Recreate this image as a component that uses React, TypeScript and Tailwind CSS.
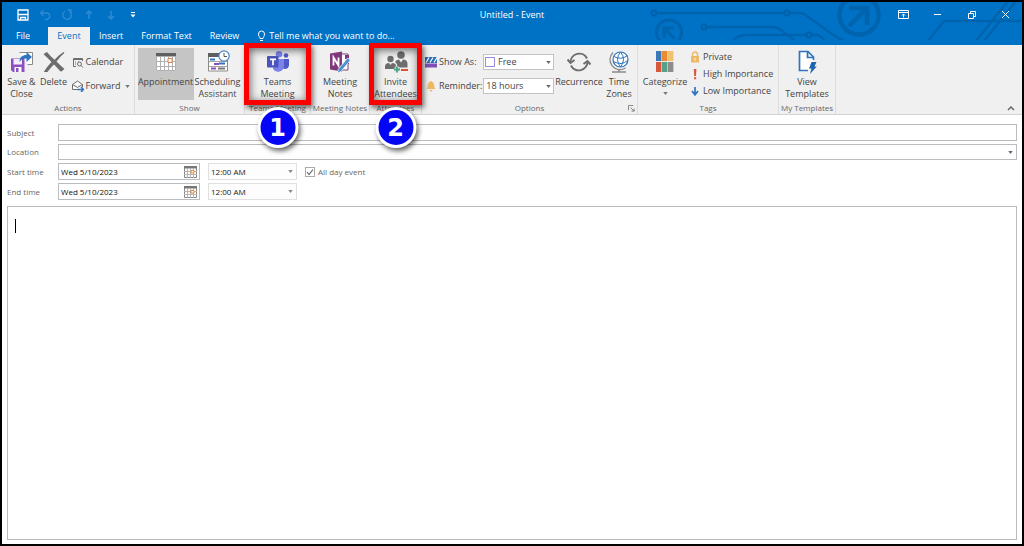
import React, { useState } from "react";
import clsx from "clsx";

const GRAY = "#6d6d6d";

function Caret({ className }: { className?: string }) {
  return (
    <svg viewBox="0 0 6 4" className={clsx("h-[3px] w-[5px]", className)} fill="currentColor">
      <path d="M0 0h6L3 4z" />
    </svg>
  );
}

function SaveIcon() {
  return (
    <svg viewBox="0 0 12 12" className="size-3" fill="none" stroke="white" strokeWidth="1.3">
      <path d="M1 1h10v10H1z" />
      <path d="M1 5.500h10M3.500 11V8.500h5V11" />
    </svg>
  );
}

function UndoIcon() {
  return (
    <svg viewBox="0 0 12 12" className="size-3" fill="none" stroke="#2f8ad2" strokeWidth="1.300">
      <path d="M4.500 1 1.500 4l3 3M1.500 4h6a3.200 3.200 0 0 1 0 6.500H6" />
    </svg>
  );
}

function RedoIcon() {
  return (
    <svg viewBox="0 0 12 12" className="size-3" fill="none" stroke="#2f8ad2" strokeWidth="1.300">
      <path d="M4 2.300A4.300 4.300 0 1 0 8.500 2.500M6.500 1h3.500v3.500" />
    </svg>
  );
}

function ArrowIcon({ down }: { down?: boolean }) {
  return (
    <svg
      viewBox="0 0 12 12"
      className={clsx("size-3", down && "rotate-180")}
      fill="none"
      stroke="#2f8ad2"
      strokeWidth="1.500"
    >
      <path d="M6 10V2M3 5l3-3 3 3" />
    </svg>
  );
}

function CustomizeIcon() {
  return (
    <svg viewBox="0 0 6 6" className="size-[6px]" fill="white">
      <path d="M1 0h4v1H1zM.500 2.500h5L3 5.500z" />
    </svg>
  );
}

function Circuit() {
  return (
    <svg
      viewBox="642 2 380 38"
      className="pointer-events-none absolute top-0 right-0 h-[38px] w-[380px]"
      fill="none"
      stroke="#0063ad"
      strokeWidth="2.300"
    >
      <circle cx="654" cy="13" r="2.500" />
      <path d="M657 13h127M790 13h10q4 0 7 3l22 16q8 6 16 9" />
      <circle cx="787" cy="13" r="2.500" />
      <circle cx="704" cy="27" r="2.500" />
      <path d="M707 27h64q6 0 10 3l13 10" />
      <path d="M733 40q6-5 13-5h60M812 35h4q5 0 8 5" />
      <circle cx="809" cy="35" r="2.500" />
      <circle cx="669" cy="32.500" r="12.500" strokeWidth="3" />
      <path d="M664 38v-10h10M664.500 28.500l10 10" strokeWidth="3" />
      <circle cx="859" cy="15" r="19.500" strokeWidth="4.500" />
      <path d="M849 8h18v17M866 9l-17 17" strokeWidth="4.500" />
      <path d="M928 41l16-20h78" strokeWidth="2.500" />
      <path d="M976 41l32-40M984 41l32-40" strokeWidth="2.500" />
    </svg>
  );
}

function SaveCloseIcon() {
  return (
    <svg viewBox="0 0 24 24" className="size-6" fill="none">
      <path d="M9.500 2.500h13v12h-5" stroke="#888" fill="#fff" />
      <path d="M1 8.500h13.500V22H3l-2-2z" fill="#8e4fc0" />
      <path d="M3.500 9h8.500v5.500H3.500z" fill="#f4eef9" />
      <path d="M4.500 17h7v5h-7z" fill="#fff" />
      <path d="M6 18h2.500v4H6z" fill="#8e4fc0" />
      <path d="M9.500 12c0-5 3-7 7-7V2l5.500 5-5.500 5V8.500c-3.500 0-5.500 1-7 3.500z" fill="#2f74bd" />
    </svg>
  );
}

function DeleteIcon() {
  return (
    <svg viewBox="0 0 24 24" className="size-6" fill={GRAY}>
      <path d="M1.500 4 5 2c2.500 3 5 5.500 7.500 7.800C15 7 18.500 4 21.500 2l1 .8c-3 2.600-5.700 5.500-8 8.700 2.500 2.500 5 5 8 7.500l-3.500 2.800c-2.700-2.600-4.700-4.900-7-7.300-2.500 2.600-4.500 4.700-6.500 7.500H1.800c2.200-4 4.900-7 7.700-10C6.500 9 4 6.500 1.500 4z" />
    </svg>
  );
}

function SmallCalendarIcon() {
  return (
    <svg viewBox="0 0 12 12" className="size-3 shrink-0" fill="none" stroke={GRAY}>
      <path d="M4 10.500H1.500v-8h9V5M1.500 3.500h9" />
      <path d="M3 6h1M3 8h1M6 6h1" />
      <circle cx="7.500" cy="8" r="2" />
      <path d="m9 9.500 2 2" />
    </svg>
  );
}

function ForwardIcon() {
  return (
    <svg viewBox="0 0 12 12" className="size-3 shrink-0" fill="none" stroke={GRAY}>
      <path d="M7 9.500H.500V4.500L5.500 1l5 3.500V7M.500 4.500l5 3 5-3" fill="#fff" />
      <path d="M5.500 9.500H11M9 7l2.500 2.500L9 12" stroke="#2f74bd" strokeWidth="1.500" />
    </svg>
  );
}

function AppointmentIcon() {
  return (
    <svg viewBox="0 0 24 24" className="size-6">
      <path d="M2 3h20v18H2z" fill="#fff" />
      <path d="M2 3h20v3.500H2z" fill="#5f5f5f" />
      <path
        d="M2.500 7v13.500h19V7M6.500 7v14M10.500 7v14M14.500 7v14M18.500 7v14M2 11.500h20M2 16.500h20"
        stroke="#b0b0b0"
        fill="none"
      />
      <path d="M14 8.500h4v4h-4z" fill="#fff" stroke="#e08040" />
    </svg>
  );
}

function SchedulingIcon() {
  return (
    <svg viewBox="0 0 24 24" className="size-6">
      <path d="M2.500 3.500h19v17.500h-19z" fill="#fff" stroke="#8a8a8a" />
      <path d="M2 3h12v4H2z" fill="#5f5f5f" />
      <path d="M3 11.500h18M3 16.500h18" stroke="#a5a5a5" />
      <path d="M4 9.500h5M13 13.500h6" stroke="#2f74bd" strokeWidth="2" />
      <path d="M8 14h5M5 18.500h5" stroke="#8e4fc0" strokeWidth="2" />
      <path d="M12 18.500h7" stroke="#777" strokeWidth="2" />
      <circle cx="18" cy="6" r="5.200" fill="#fff" stroke="#4a83c4" strokeWidth="1.200" />
      <path d="M18 3v3.500h3" stroke="#555" fill="none" />
    </svg>
  );
}

function TeamsIcon() {
  return (
    <svg viewBox="0 0 24 24" className="size-6">
      <circle cx="13" cy="4.200" r="3.300" fill="#7b83eb" />
      <circle cx="20" cy="5.500" r="2.300" fill="#5059c9" />
      <path d="M16 9h7v6.500a4 4 0 0 1-7 2z" fill="#5059c9" />
      <path d="M8 9h10v7a6 6 0 0 1-11 3z" fill="#7b83eb" />
      <rect x="1" y="6" width="11.500" height="11.500" rx="1" fill="#4b53bc" />
      <path d="M4 9.300h6M7 9.300v6" stroke="#fff" strokeWidth="1.700" />
    </svg>
  );
}

function OneNoteIcon() {
  return (
    <svg viewBox="0 0 24 24" className="size-6">
      <path d="M13 4h7v16h-7z" fill="#fff" stroke="#80397b" />
      <path d="M17 5h4v4h-4zM17 10h4v4h-4z" fill="#80397b" />
      <path d="M2 3.500 14 1.500v20L2 19.500z" fill="#80397b" />
      <path d="M5.500 15.500v-8l5 8v-8" stroke="#fff" strokeWidth="1.800" fill="none" />
      <path d="m19.500 8 3 2L13 21.500 9.500 23l.8-3.700z" fill="#4a8fce" stroke="#fff" strokeWidth=".7" />
    </svg>
  );
}

function AttendeesIcon() {
  return (
    <svg viewBox="0 0 24 24" className="size-6" fill={GRAY}>
      <circle cx="6.500" cy="9" r="3.200" />
      <circle cx="17" cy="5" r="3.800" />
      <path d="M1 19v-2.500Q1 13 5 13l1.500 2L8 13q4 0 4 3v3z" />
      <path d="M11 12q1-2.500 4-2.500l2 3 2-3q4.500 0 4.500 4.500v3.500H13.500q0-4-2.500-5.500z" />
      <path d="M10 19.500h6M13 16.500v6" stroke="#e4e4e4" strokeWidth="3.500" />
      <path d="M10 19.500h6M13 16.500v6" stroke="#45a583" strokeWidth="1.800" />
      <path d="M17 20h7" stroke="#dc5034" strokeWidth="2" />
    </svg>
  );
}

function ShowAsIcon() {
  return (
    <svg viewBox="0 0 12 12" className="size-3 shrink-0">
      <path d="M0 1h12v6H0z" fill="#2b6cb3" />
      <path d="m1 6.500 3-5M5 6.500l3-5M9 6.500l3-5" stroke="#fff" strokeWidth="1.200" />
      <path d="M0 7.500h12v4H0z" fill="#7f4fb5" />
    </svg>
  );
}

function BellIcon() {
  return (
    <svg viewBox="0 0 12 12" className="size-3 shrink-0" fill="#edb965">
      <path d="M1.500 9C3 7.500 2.500 5 3 4c.4-1.200 1.300-2 2.200-2.200V1h1.600v.8C7.700 2 8.600 2.800 9 4c.5 1-.0 3.500 1.500 5zM4.500 10h3q-.2 1.500-1.500 1.500T4.500 10z" />
    </svg>
  );
}

function RecurrenceIcon() {
  return (
    <svg viewBox="0 0 24 24" className="size-6" fill="none" stroke={GRAY} strokeWidth="2">
      <path d="M3.500 12.500A8.700 8.700 0 0 1 20 8.500M20.500 11.500A8.700 8.700 0 0 1 4 15.500" />
      <path d="M.500 9.500l3 3.500 4-3M23.500 14.500l-3-3.500-4 3" />
    </svg>
  );
}

function GlobeIcon() {
  return (
    <svg viewBox="0 0 24 24" className="size-6" fill="none">
      <path d="M6 2.500a10 10 0 0 0 12.500 15.500" stroke="#8a8a8a" strokeWidth="1.300" />
      <path d="M12 19v3M5 22h14" stroke="#8a8a8a" strokeWidth="1.500" />
      <circle cx="13.500" cy="9.500" r="7.500" fill="#fff" stroke="#2f74bd" strokeWidth="1.200" />
      <path
        d="M7 6.500q7 4 13.500-1M6.500 11.500q8 4.500 14-1M13.500 2q-6 7 0 15M13.500 2q6 7 0 15"
        stroke="#2f74bd"
        strokeWidth="1"
      />
    </svg>
  );
}

const SWATCHES = ["#3b78ba", "#e88b33", "#f3c06d", "#d9573c", "#57a287", "#8d8d8d"];

function CategorizeIcon() {
  return (
    <svg viewBox="0 0 24 24" className="size-6">
      {SWATCHES.map((fill, i) => (
        <rect key={fill} x={3 + (i % 3) * 6} y={i < 3 ? 1 : 12} width="5.400" height="10" fill={fill} />
      ))}
    </svg>
  );
}

function LockIcon() {
  return (
    <svg viewBox="0 0 12 12" className="size-3 shrink-0">
      <path d="M3.500 6V3.500a2.500 2.500 0 0 1 5 0V6" fill="none" stroke="#edb965" strokeWidth="1.500" />
      <path d="M2 5h8v6.500H2z" fill="#edb965" />
      <path d="M5.500 7h1v2.500h-1z" fill="#fff" />
    </svg>
  );
}

function HighIcon() {
  return (
    <svg viewBox="0 0 12 12" className="size-3 shrink-0" fill="#d9573c">
      <path d="M4.800 1h2.600L7 8H5.200zM5 9.300h2.200v2H5z" />
    </svg>
  );
}

function LowIcon() {
  return (
    <svg viewBox="0 0 12 12" className="size-3 shrink-0" fill="none" stroke="#2f74bd" strokeWidth="1.700">
      <path d="M6 2v8M3 6l3 3.800L9 6" />
    </svg>
  );
}

function TemplatesIcon() {
  return (
    <svg viewBox="0 0 24 24" className="size-6">
      <path
        d="M13 20.500H4.500v-19h8.500l5.500 5.500v3M12.500 2v5.500h6"
        fill="#fff"
        stroke="#2f74bd"
        strokeWidth="1.700"
      />
      <path d="M16.500 12h5l-2 4.500h2.300L15 24l1.500-5.500H14z" fill="#1f65ae" />
    </svg>
  );
}

function DateIcon() {
  return (
    <svg viewBox="0 0 13 12" className="h-3 w-[13px]">
      <path d="M.500.500h12v11H.500z" fill="#fff" stroke="#888" />
      <path d="M0 0h13v2.500H0z" fill="#777" />
      <path d="M3.500 2v10M6.500 2v10M9.500 2v10M0 5.500h13M0 8.500h13" stroke="#b5b5b5" />
      <path d="M7 4.500h3v2.500H7z" fill="#fff" stroke="#e88b33" />
    </svg>
  );
}

function BigButton({
  icon,
  lines,
  className,
  children,
}: {
  icon: React.ReactNode;
  lines: string[];
  className?: string;
  children?: React.ReactNode;
}) {
  return (
    <button
      type="button"
      className={clsx("relative flex h-[52px] shrink-0 flex-col items-center whitespace-nowrap pt-[2px]", className)}
    >
      {icon}
      <span className="mt-[2px] flex flex-col items-center leading-3">
        {lines.map((line) => (
          <span key={line}>{line}</span>
        ))}
      </span>
      {children}
    </button>
  );
}

function SmallButton({ icon, label, caret }: { icon: React.ReactNode; label: string; caret?: boolean }) {
  return (
    <button type="button" className="flex items-center gap-[2px] whitespace-nowrap leading-3">
      {icon}
      <span>{label}</span>
      {caret && <Caret className="ml-[3px] shrink-0 text-[#777]" />}
    </button>
  );
}

function Group({
  label,
  className,
  launcher,
  children,
}: {
  label: string;
  className?: string;
  launcher?: boolean;
  children: React.ReactNode;
}) {
  return (
    <section
      aria-label={label}
      className={clsx("relative flex shrink-0 flex-col border-r border-[#dcdcdc] pt-[3px]", className)}
    >
      <div className="flex justify-center">{children}</div>
      <div className="mt-[2px] flex justify-center whitespace-nowrap text-[8px] leading-3 text-[#666]">{label}</div>
      {launcher && (
        <button type="button" aria-label={`${label} settings`} className="absolute right-[2px] bottom-[2px]">
          <svg viewBox="0 0 8 8" className="size-[7px]" fill="none" stroke="#777">
            <path d="M.500 6V.500H6M3 3l4 4M7 4v3H4" />
          </svg>
        </button>
      )}
    </section>
  );
}

// Red frame with a numbered bubble underneath
function Callout({ step }: { step: number }) {
  return (
    <span className="pointer-events-none absolute inset-x-0 -top-[5px] -bottom-[5px] z-10 border-[5px] border-[#fb0000] shadow-[2px_3px_5px_rgba(0,0,0,0.55),inset_1px_2px_8px_rgba(0,0,0,0.6)]">
      <span className="absolute top-full left-1/2 mt-[7px] flex size-[41px] -translate-x-1/2 items-center justify-center rounded-full border-[3px] border-white bg-[#0505f5] font-['DejaVu_Sans',sans-serif] text-2xl leading-none font-bold text-white shadow-[2px_3px_5px_rgba(0,0,0,0.6)]">
        {step}
      </span>
    </span>
  );
}

function DateField({ id, label, value }: { id: string; label: string; value: string }) {
  const [date, setDate] = useState(value);
  const [time, setTime] = useState("12:00 AM");

  return (
    <div className="flex items-center">
      <label htmlFor={id} className="w-[51px] shrink-0">
        {label}
      </label>
      <div className="flex h-[17px] w-[142px] items-center border border-[#b9bcc0] bg-white pr-[2px]">
        <input
          id={id}
          value={date}
          onChange={(e) => setDate(e.target.value)}
          className="min-w-0 flex-1 px-[2px] text-[#111] outline-none"
        />
        <button type="button" aria-label={`Pick ${label.toLowerCase()}`}>
          <DateIcon />
        </button>
      </div>
      <div className="relative ml-2 h-[17px] w-[89px]">
        <select
          aria-label={`${label} hour`}
          value={time}
          onChange={(e) => setTime(e.target.value)}
          className="size-full appearance-none border border-[#e0e0e0] bg-[#fdfdfd] px-[2px] text-[#222] outline-none"
        >
          <option>12:00 AM</option>
          <option>12:30 AM</option>
        </select>
        <Caret className="pointer-events-none absolute top-[7px] right-1 text-[#888]" />
      </div>
    </div>
  );
}

export default function App() {
  const [allDay, setAllDay] = useState(true);
  const [notes, setNotes] = useState("");

  return (
    <div className="flex min-h-screen flex-col border-2 border-black bg-white font-['Open_Sans',sans-serif] text-[9px] text-[#444]">
      <header className="relative bg-[#0072c6] text-white">
        <Circuit />
        <div className="relative grid h-[25px] grid-cols-[1fr_auto_1fr] items-center">
          <div className="flex pl-[10px]">
            {[
              { name: "Save", icon: <SaveIcon /> },
              { name: "Undo", icon: <UndoIcon /> },
              { name: "Redo", icon: <RedoIcon /> },
              { name: "Previous", icon: <ArrowIcon /> },
              { name: "Next", icon: <ArrowIcon down /> },
              { name: "Customize", icon: <CustomizeIcon /> },
            ].map((item) => (
              <button
                key={item.name}
                type="button"
                aria-label={item.name}
                className="flex h-6 w-[22px] items-center justify-center"
              >
                {item.icon}
              </button>
            ))}
          </div>
          <h1>Untitled - Event</h1>
          <div className="flex justify-end">
            {[
              { name: "Ribbon options", d: "M.500 1.500h10v8H.500zM.500 3.500h10M5.500 8.500V5M4 6.500 5.500 5 7 6.500" },
              { name: "Minimize", d: "M2 5.500h7" },
              { name: "Restore", d: "M2.500 4.500h5v5h-5zM4.500 4.500v-2h5v5h-2" },
              { name: "Close", d: "m2 2 7 7M9 2 2 9" },
            ].map((item) => (
              <button
                key={item.name}
                type="button"
                aria-label={item.name}
                className="flex h-6 w-[34px] items-center justify-center"
              >
                <svg viewBox="0 0 11 11" className="size-[11px]" fill="none" stroke="white">
                  <path d={item.d} />
                </svg>
              </button>
            ))}
          </div>
        </div>
        <nav className="relative flex h-[18px] items-stretch whitespace-nowrap">
          <button type="button" className="w-[46px] pr-1">
            File
          </button>
          <button type="button" className="w-[42px] bg-[#f0f0f0] text-[#0072c6]">
            Event
          </button>
          <button type="button" className="px-[9px]">
            Insert
          </button>
          <button type="button" className="px-[9px]">
            Format Text
          </button>
          <button type="button" className="px-[9px]">
            Review
          </button>
          <button type="button" className="flex items-center gap-[3px] px-[9px]">
            <svg viewBox="0 0 9 12" className="h-3 w-[9px]" fill="none" stroke="white">
              <path d="M3 8.500C3 7 1.500 6.500 1.500 4a3 3 0 0 1 6 0C7.500 6.500 6 7 6 8.500zM3 10.500h3" />
            </svg>
            Tell me what you want to do...
          </button>
        </nav>
      </header>

      <div className="relative flex border-b border-[#d2d2d2] bg-[#f0f0f0]">
        <Group label="Actions" className="w-[133px]">
          <BigButton icon={<SaveCloseIcon />} lines={["Save &", "Close"]} className="w-[34px]" />
          <BigButton icon={<DeleteIcon />} lines={["Delete"]} className="w-[30px]" />
          <div className="ml-[3px] flex w-[60px] flex-col gap-3 pt-2">
            <SmallButton icon={<SmallCalendarIcon />} label="Calendar" />
            <SmallButton icon={<ForwardIcon />} label="Forward" caret />
          </div>
        </Group>
        <Group label="Show" className="w-[110px]">
          <BigButton icon={<AppointmentIcon />} lines={["Appointment"]} className="w-[56px] bg-[#c5c5c5]" />
          <BigButton icon={<SchedulingIcon />} lines={["Scheduling", "Assistant"]} className="w-[48px]" />
        </Group>
        <Group label="Teams Meeting" className="w-[66px]">
          <BigButton icon={<TeamsIcon />} lines={["Teams", "Meeting"]} className="w-[67px]">
            <Callout step={1} />
          </BigButton>
        </Group>
        <Group label="Meeting Notes" className="w-[59px]">
          <BigButton icon={<OneNoteIcon />} lines={["Meeting", "Notes"]} className="w-[50px]" />
        </Group>
        <Group label="Attendees" className="w-[52px]">
          <BigButton icon={<AttendeesIcon />} lines={["Invite", "Attendees"]} className="w-[53px]">
            <Callout step={2} />
          </BigButton>
        </Group>
        <Group label="Options" className="w-[216px]" launcher>
          <div className="flex w-[129px] flex-col gap-2 pt-[6px]">
            <div className="flex items-center gap-px whitespace-nowrap">
              <ShowAsIcon />
              <label htmlFor="show-as" className="flex-1 pl-px">
                Show As:
              </label>
              <div className="relative h-4 w-[71px] shrink-0">
                <select
                  id="show-as"
                  className="size-full appearance-none border border-[#c3c3c3] bg-white pl-[14px] outline-none"
                >
                  <option>Free</option>
                  <option>Busy</option>
                </select>
                <span className="pointer-events-none absolute top-[3px] left-[2px] size-[10px] border border-[#9b8be0] bg-white" />
                <Caret className="pointer-events-none absolute top-[7px] right-[3px] text-[#666]" />
              </div>
            </div>
            <div className="flex items-center gap-px whitespace-nowrap">
              <BellIcon />
              <label htmlFor="reminder" className="flex-1 pl-px">
                Reminder:
              </label>
              <div className="relative h-4 w-[71px] shrink-0">
                <select
                  id="reminder"
                  className="size-full appearance-none border border-[#c3c3c3] bg-white pl-[2px] outline-none"
                >
                  <option>18 hours</option>
                  <option>1 day</option>
                </select>
                <Caret className="pointer-events-none absolute top-[7px] right-[3px] text-[#666]" />
              </div>
            </div>
          </div>
          <BigButton icon={<RecurrenceIcon />} lines={["Recurrence"]} className="w-[50px]" />
          <BigButton icon={<GlobeIcon />} lines={["Time", "Zones"]} className="w-[30px]" />
        </Group>
        <Group label="Tags" className="w-[141px]">
          <BigButton icon={<CategorizeIcon />} lines={["Categorize"]} className="w-[48px]">
            <Caret className="mt-1 text-[#777]" />
          </BigButton>
          <div className="flex w-[86px] flex-col gap-[5px] pt-[3px]">
            <SmallButton icon={<LockIcon />} label="Private" />
            <SmallButton icon={<HighIcon />} label="High Importance" />
            <SmallButton icon={<LowIcon />} label="Low Importance" />
          </div>
        </Group>
        <Group label="My Templates" className="w-[57px]">
          <BigButton icon={<TemplatesIcon />} lines={["View", "Templates"]} className="w-[54px]" />
        </Group>
        <button type="button" aria-label="Collapse ribbon" className="mt-auto mr-[7px] mb-[3px] ml-auto">
          <svg viewBox="0 0 8 6" className="h-[6px] w-2" fill="none" stroke="#666" strokeWidth="1.500">
            <path d="m1 5 3-3 3 3" />
          </svg>
        </button>
      </div>

      <main className="flex flex-1 flex-col px-[5px] pt-[9px] pb-1 text-[8px] leading-3 text-[#666]">
        <form className="flex flex-col gap-[3px]">
          <div className="flex items-center">
            <label htmlFor="subject" className="w-[51px] shrink-0">
              Subject
            </label>
            <input id="subject" className="h-[17px] min-w-0 flex-1 border border-[#b9bcc0] px-1 outline-none" />
          </div>
          <div className="flex items-center">
            <label htmlFor="location" className="w-[51px] shrink-0">
              Location
            </label>
            <div className="flex h-4 flex-1 items-center border border-[#b9bcc0] pr-[3px]">
              <input id="location" className="min-w-0 flex-1 px-1 outline-none" />
              <button type="button" aria-label="Recent locations">
                <Caret className="text-[#666]" />
              </button>
            </div>
          </div>
          <div className="flex items-center">
            <DateField id="start" label="Start time" value="Wed 5/10/2023" />
            <label className="relative ml-2 flex items-center gap-[3px]">
              <input
                type="checkbox"
                checked={allDay}
                onChange={(e) => setAllDay(e.target.checked)}
                className="size-[10px] appearance-none border border-[#aaa] bg-white"
              />
              {allDay && (
                <svg
                  viewBox="0 0 8 8"
                  className="pointer-events-none absolute left-px size-2"
                  fill="none"
                  stroke="#666"
                  strokeWidth="1.200"
                >
                  <path d="m1 4 2 2.500L7 1.500" />
                </svg>
              )}
              All day event
            </label>
          </div>
          <DateField id="end" label="End time" value="Wed 5/10/2023" />
        </form>
        <div className="relative mt-[6px] flex flex-1">
          <textarea
            aria-label="Notes"
            value={notes}
            onChange={(e) => setNotes(e.target.value)}
            className="peer flex-1 resize-none border border-[#b9bcc0] px-2 py-3 text-[11px] leading-4 text-black outline-none"
          />
          {notes === "" && (
            <span className="pointer-events-none absolute top-[13px] left-2 h-[14px] w-px bg-black peer-focus:hidden" />
          )}
        </div>
      </main>
    </div>
  );
}
